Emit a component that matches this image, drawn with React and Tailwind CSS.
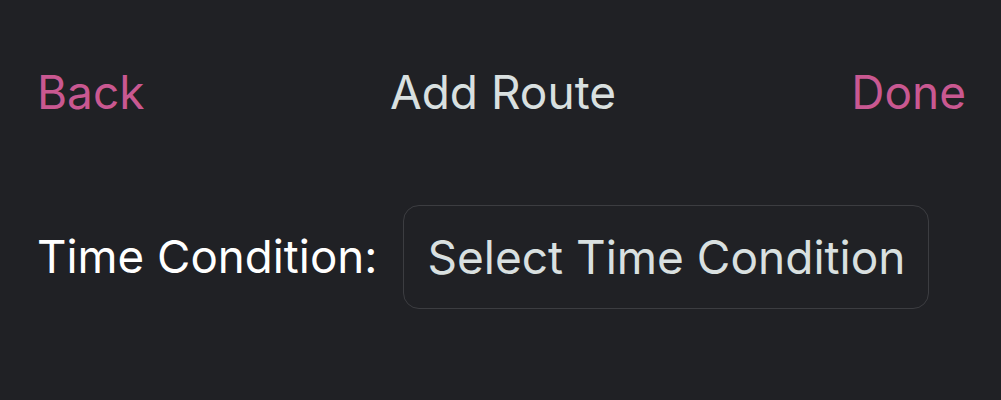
export default function App() {
  return (
    <div
      className="h-[400px] w-[1001px] bg-[#202125]"
      style={{ fontFamily: 'Inter, "Noto Sans", sans-serif' }}
    >
      <div className="grid h-[205px] grid-cols-3 items-start pl-[37px] pr-[35px] pt-[64px]">
        <button className="justify-self-start text-[46px] leading-[56px] text-[#c95891]">Back</button>
        <h1 className="justify-self-center pl-[3px] text-[46px] leading-[56px] text-[#d9e0e0]">Add Route</h1>
        <button className="justify-self-end text-[46px] leading-[56px] text-[#c95891]">Done</button>
      </div>
      <div className="flex items-center gap-[26px] px-[37px]">
        <span className="text-[45.7px] text-white">Time Condition:</span>
        <button className="flex h-[104px] w-[526px] items-center justify-center rounded-[16px] border border-[#3c3d41] text-[46px] text-[#d9e0e0]">
          Select Time Condition
        </button>
      </div>
    </div>
  );
}
